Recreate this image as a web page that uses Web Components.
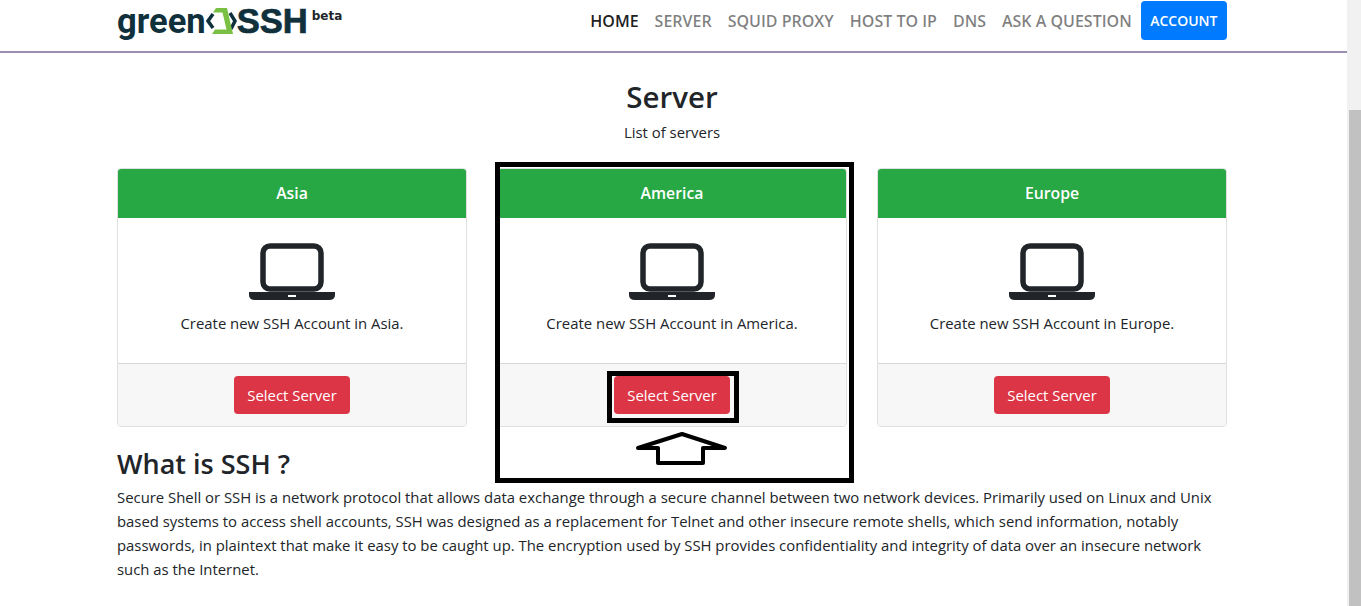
<!DOCTYPE html>
<html>
<head>
<meta charset="utf-8">
<title>Server</title>
<style>
    html, body { margin: 0; padding: 0; height: 606px; overflow: hidden; background: #fff; }
    body { font-family: "Open Sans", "Noto Sans", sans-serif; color: #212529; }
    #page { display: flex; height: 606px; }
    #main { flex: 1; min-width: 0; position: relative; }
</style>
</head>
<body>
<div id="page">
    <div id="main">
        <site-nav></site-nav>
        <page-content>
            <page-title title-text="Server" sub="List of servers"></page-title>
            <card-row>
                <server-card region="Asia"></server-card>
                <server-card region="America"></server-card>
                <server-card region="Europe"></server-card>
            </card-row>
            <ssh-about></ssh-about>
        </page-content>
        <mark-up></mark-up>
    </div>
    <fake-scrollbar></fake-scrollbar>
</div>

<script>
class SiteNav extends HTMLElement {
    constructor() {
        super();
        this.shadowDOM = this.attachShadow({mode: "open"});
        this.shadowDOM.innerHTML = `
        <style>
        :host { display: block; height: 51px; border-bottom: 2px solid #9a8fb0; }
        .inner { width: 1110px; margin-left: 117px; height: 51px; display: flex; align-items: flex-start; justify-content: space-between; }
        .logo { display: flex; align-items: flex-start; color: #10303c; height: 51px; }
        .logo b { display: block; white-space: nowrap; }
        .logo .green { font-family: Roboto, sans-serif; font-size: 34.5px; line-height: 40px; margin-top: 1px; }
        .logo svg { display: block; margin-top: 7px; }
        .logo .ssh { font-family: "Liberation Sans", sans-serif; font-size: 34.6px; line-height: 40px; margin-top: 1px; -webkit-text-stroke: .7px #10303c; }
        .logo sup { font-family: "DejaVu Sans", sans-serif; font-weight: 700; font-size: 12px; line-height: 14px; color: #212529; margin: 9px 0 0 4px; }
        ul { list-style: none; margin: 0; padding: 0; display: flex; align-items: flex-start; font-size: 16px; font-weight: 600; }
        li { color: rgba(0,0,0,.5); padding: 0 8px; line-height: 22px; margin-top: 10px; }
        li.on { color: rgba(0,0,0,.9); }
        li.btn { background: #007bff; color: #fff; border-radius: 4px; margin: 1px 0 0 1px; padding: 0 9.5px; height: 39px; line-height: 39px; font-size: 14px; }
        </style>
        <div class="inner">
            <div class="logo">
                <b class="green">green</b>
                <svg width="31" height="28" viewBox="0 0 31 28">
                    <path d="M7 7 L2 14 L7 21 M24 6 L29 14 L25 22" fill="none" stroke="#10303c" stroke-width="3.5"/>
                    <path d="M10 1 H21 L27 27 H6 L9 22.5 H20.5 L16.5 5.5 H7 Z" fill="#7ac143"/>
                </svg>
                <b class="ssh">SSH</b>
                <sup>beta</sup>
            </div>
            <ul>
                <li class="on">HOME</li>
                <li>SERVER</li>
                <li>SQUID PROXY</li>
                <li>HOST TO IP</li>
                <li>DNS</li>
                <li>ASK A QUESTION</li>
                <li class="btn">ACCOUNT</li>
            </ul>
        </div>`;
    }
}

class PageContent extends HTMLElement {
    constructor() {
        super();
        this.attachShadow({mode: "open"}).innerHTML = `
        <style>
        :host { display: block; width: 1110px; margin-left: 117px; }
        </style>
        <slot></slot>`;
    }
}

class PageTitle extends HTMLElement {
    connectedCallback() {
        this.shadowRoot || this.attachShadow({mode: "open"});
        this.shadowRoot.innerHTML = `
        <style>
        :host { display: block; text-align: center; padding-top: 25px; }
        h2 { margin: 0; font-size: 29.5px; font-weight: 600; line-height: 38px; }
        p { margin: 4px 0 0; font-size: 14.9px; line-height: 24px; }
        </style>
        <h2>${this.getAttribute("title-text")}</h2>
        <p>${this.getAttribute("sub")}</p>`;
    }
}

class CardRow extends HTMLElement {
    constructor() {
        super();
        this.attachShadow({mode: "open"}).innerHTML = `
        <style>
        :host { display: grid; grid-template-columns: repeat(3, 350px); gap: 30px; margin-top: 24px; }
        </style>
        <slot></slot>`;
    }
}

class ServerCard extends HTMLElement {
    connectedCallback() {
        this.shadowRoot || this.attachShadow({mode: "open"});
        const region = this.getAttribute("region");
        this.shadowRoot.innerHTML = `
        <style>
        :host { display: block; }
        .card { border: 1px solid rgba(0,0,0,.125); border-radius: 4px; text-align: center; overflow: hidden; height: 259px; box-sizing: border-box; display: flex; flex-direction: column; }
        .head { background: #28a745; color: #fff; font-weight: 600; font-size: 15.8px; height: 49px; line-height: 49px; }
        .body { flex: 1; display: flex; flex-direction: column; align-items: center; padding-top: 25px; box-sizing: border-box; }
        .body svg { display: block; }
        .body p { margin: 10px 0 0; font-size: 14.9px; line-height: 24px; }
        .foot { background: #f7f7f7; border-top: 1px solid rgba(0,0,0,.125); height: 63px; box-sizing: border-box; padding-top: 12px; }
        .foot span { display: inline-block; background: #dc3545; color: #fff; border-radius: 4px; font-size: 14.9px; height: 38px; line-height: 38px; padding: 0 13px; }
        </style>
        <div class="card">
            <div class="head">${region}</div>
            <div class="body">
                <svg width="86" height="58" viewBox="0 0 86 58">
                    <rect x="14" y="3" width="58" height="43" rx="7" fill="none" stroke="#212529" stroke-width="5.5"/>
                    <path d="M0 49 H86 V52 Q86 57 80 57 H6 Q0 57 0 52 Z" fill="#212529"/>
                    <rect x="39" y="52" width="8" height="2" fill="#fff"/>
                </svg>
                <p>Create new SSH Account in ${region}.</p>
            </div>
            <div class="foot"><span>Select Server</span></div>
        </div>`;
    }
}

class SshAbout extends HTMLElement {
    constructor() {
        super();
        this.attachShadow({mode: "open"}).innerHTML = `
        <style>
        :host { display: block; margin-top: 18px; }
        h3 { margin: 0; font-size: 27px; font-weight: 600; line-height: 38px; }
        p { margin: 2px 0 0; font-size: 14.88px; line-height: 24px; }
        </style>
        <h3>What is SSH ?</h3>
        <p>Secure Shell or SSH is a network protocol that allows data exchange through a secure channel between two network devices. Primarily used on Linux and Unix based systems to access shell accounts, SSH was designed as a replacement for Telnet and other insecure remote shells, which send information, notably passwords, in plaintext that make it easy to be caught up. The encryption used by SSH provides confidentiality and integrity of data over an insecure network such as the Internet.</p>`;
    }
}

// hand drawn boxes + arrow pasted on top of the screenshot
class MarkUp extends HTMLElement {
    constructor() {
        super();
        this.attachShadow({mode: "open"}).innerHTML = `
        <style>
        :host { display: block; position: absolute; left: 0; top: 0; pointer-events: none; }
        .outer, .inner { position: absolute; box-sizing: border-box; border: 5px solid #000; }
        .outer { left: 495px; top: 162px; width: 359px; height: 321px; }
        .inner { left: 607px; top: 371px; width: 132px; height: 52px; }
        svg { position: absolute; left: 635px; top: 430px; }
        </style>
        <div class="outer"></div>
        <div class="inner"></div>
        <svg width="94" height="36" viewBox="0 0 94 36">
            <path d="M3 18 L47 4 L90 18 H68 V33 H23 V18 Z" fill="#fff" stroke="#000" stroke-width="4" stroke-linejoin="round"/>
        </svg>`;
    }
}

class FakeScrollbar extends HTMLElement {
    constructor() {
        super();
        this.attachShadow({mode: "open"}).innerHTML = `
        <style>
        :host { display: block; width: 14px; height: 606px; background: #f1f1f1; position: relative; flex: none; }
        .thumb { margin: 110px 0 0 2px; height: 496px; background: #c1c1c1; }
        </style>
        <div class="thumb"></div>`;
    }
}

customElements.define("site-nav", SiteNav);
customElements.define("page-content", PageContent);
customElements.define("page-title", PageTitle);
customElements.define("card-row", CardRow);
customElements.define("server-card", ServerCard);
customElements.define("ssh-about", SshAbout);
customElements.define("mark-up", MarkUp);
customElements.define("fake-scrollbar", FakeScrollbar);
</script>
</body>
</html>
